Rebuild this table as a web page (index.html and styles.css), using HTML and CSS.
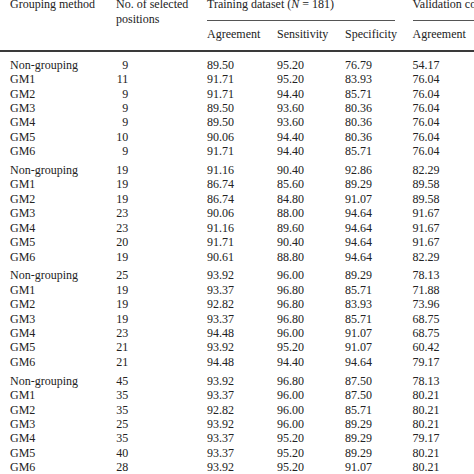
FILE: index.html
```html
<!DOCTYPE html>
<html>
<head>
<meta charset="utf-8">
<link rel="stylesheet" href="styles.css">
</head>
<body>
<div class="wrap">
<table class="tbl">
<colgroup>
<col class="c1"><col class="c2"><col class="c3"><col class="c4"><col class="c5"><col class="c6">
</colgroup>
<thead>
<tr class="h1">
<th rowspan="2" class="rs first"><span class="l1">Grouping method</span></th>
<th rowspan="2" class="rs"><span class="l1">No. of selected</span><span class="l2">positions</span></th>
<th colspan="3" class="grp train"><div class="grp-label">Training dataset (<i>N</i> = 181)</div></th>
<th class="grp valid"><div class="grp-label">Validation cohort (<i>N</i> = 96)</div></th>
</tr>
<tr class="h2">
<th>Agreement</th>
<th>Sensitivity</th>
<th>Specificity</th>
<th>Agreement</th>
</tr>
</thead>
<tbody class="g g1">
<tr><td class="m">Non-grouping</td><td class="n">9</td><td>89.50</td><td>95.20</td><td>76.79</td><td>54.17</td></tr>
<tr><td class="m">GM1</td><td class="n">11</td><td>91.71</td><td>95.20</td><td>83.93</td><td>76.04</td></tr>
<tr><td class="m">GM2</td><td class="n">9</td><td>91.71</td><td>94.40</td><td>85.71</td><td>76.04</td></tr>
<tr><td class="m">GM3</td><td class="n">9</td><td>89.50</td><td>93.60</td><td>80.36</td><td>76.04</td></tr>
<tr><td class="m">GM4</td><td class="n">9</td><td>89.50</td><td>93.60</td><td>80.36</td><td>76.04</td></tr>
<tr><td class="m">GM5</td><td class="n">10</td><td>90.06</td><td>94.40</td><td>80.36</td><td>76.04</td></tr>
<tr><td class="m">GM6</td><td class="n">9</td><td>91.71</td><td>94.40</td><td>85.71</td><td>76.04</td></tr>
</tbody>
<tbody class="g">
<tr><td class="m">Non-grouping</td><td class="n">19</td><td>91.16</td><td>90.40</td><td>92.86</td><td>82.29</td></tr>
<tr><td class="m">GM1</td><td class="n">19</td><td>86.74</td><td>85.60</td><td>89.29</td><td>89.58</td></tr>
<tr><td class="m">GM2</td><td class="n">19</td><td>86.74</td><td>84.80</td><td>91.07</td><td>89.58</td></tr>
<tr><td class="m">GM3</td><td class="n">23</td><td>90.06</td><td>88.00</td><td>94.64</td><td>91.67</td></tr>
<tr><td class="m">GM4</td><td class="n">23</td><td>91.16</td><td>89.60</td><td>94.64</td><td>91.67</td></tr>
<tr><td class="m">GM5</td><td class="n">20</td><td>91.71</td><td>90.40</td><td>94.64</td><td>91.67</td></tr>
<tr><td class="m">GM6</td><td class="n">19</td><td>90.61</td><td>88.80</td><td>94.64</td><td>82.29</td></tr>
</tbody>
<tbody class="g">
<tr><td class="m">Non-grouping</td><td class="n">25</td><td>93.92</td><td>96.00</td><td>89.29</td><td>78.13</td></tr>
<tr><td class="m">GM1</td><td class="n">19</td><td>93.37</td><td>96.80</td><td>85.71</td><td>71.88</td></tr>
<tr><td class="m">GM2</td><td class="n">19</td><td>92.82</td><td>96.80</td><td>83.93</td><td>73.96</td></tr>
<tr><td class="m">GM3</td><td class="n">19</td><td>93.37</td><td>96.80</td><td>85.71</td><td>68.75</td></tr>
<tr><td class="m">GM4</td><td class="n">23</td><td>94.48</td><td>96.00</td><td>91.07</td><td>68.75</td></tr>
<tr><td class="m">GM5</td><td class="n">21</td><td>93.92</td><td>95.20</td><td>91.07</td><td>60.42</td></tr>
<tr><td class="m">GM6</td><td class="n">21</td><td>94.48</td><td>94.40</td><td>94.64</td><td>79.17</td></tr>
</tbody>
<tbody class="g">
<tr><td class="m">Non-grouping</td><td class="n">45</td><td>93.92</td><td>96.80</td><td>87.50</td><td>78.13</td></tr>
<tr><td class="m">GM1</td><td class="n">35</td><td>93.37</td><td>96.00</td><td>87.50</td><td>80.21</td></tr>
<tr><td class="m">GM2</td><td class="n">35</td><td>92.82</td><td>96.00</td><td>85.71</td><td>80.21</td></tr>
<tr><td class="m">GM3</td><td class="n">25</td><td>93.92</td><td>96.00</td><td>89.29</td><td>80.21</td></tr>
<tr><td class="m">GM4</td><td class="n">35</td><td>93.37</td><td>95.20</td><td>89.29</td><td>79.17</td></tr>
<tr><td class="m">GM5</td><td class="n">40</td><td>93.37</td><td>95.20</td><td>89.29</td><td>80.21</td></tr>
<tr><td class="m">GM6</td><td class="n">28</td><td>93.92</td><td>95.20</td><td>91.07</td><td>80.21</td></tr>
</tbody>
</table>
</div>
</body>
</html>
```
FILE: styles.css
```css
html, body {
  margin: 0;
  padding: 0;
  background: #ffffff;
}
.wrap {
  width: 474px;
  height: 474px;
  overflow: hidden;
}
.tbl {
  border-collapse: separate;
  border-spacing: 0;
  table-layout: fixed;
  width: 532.5px;
  font-family: "Liberation Serif", "Times New Roman", serif;
  font-size: 12px;
  color: #222;
}
.c1 { width: 116px; }
.c2 { width: 91px; }
.c3 { width: 70px; }
.c4 { width: 68px; }
.c5 { width: 67.5px; }
.c6 { width: 120px; }

th, td {
  padding: 0;
  text-align: left;
  font-weight: normal;
  white-space: nowrap;
}
thead th {
  line-height: 14px;
  vertical-align: top;
}
.l1 {
  display: block;
  line-height: 9.3px;
}
.l2 {
  display: block;
  line-height: 14px;
  padding-top: 2.35px;
}
th.rs {
  border-bottom: 2px solid #3a3a3a;
}
th.first {
  padding-left: 10px;
}
.grp-label {
  line-height: 9.3px;
  padding-bottom: 11.2px;
  border-bottom: 1px solid #555;
}
th.train {
  padding-right: 17.5px;
}
.h2 th {
  padding-top: 5.15px;
  padding-bottom: 9.35px;
  border-bottom: 2px solid #3a3a3a;
}
tbody td {
  line-height: 14.4px;
}
td.m {
  padding-left: 10px;
}
td.n {
  text-align: right;
  padding-right: 78.8px;
}
tbody.g tr:first-child td {
  padding-top: 4.5px;
}
tbody.g1 tr:first-child td {
  padding-top: 5.75px;
}
```
